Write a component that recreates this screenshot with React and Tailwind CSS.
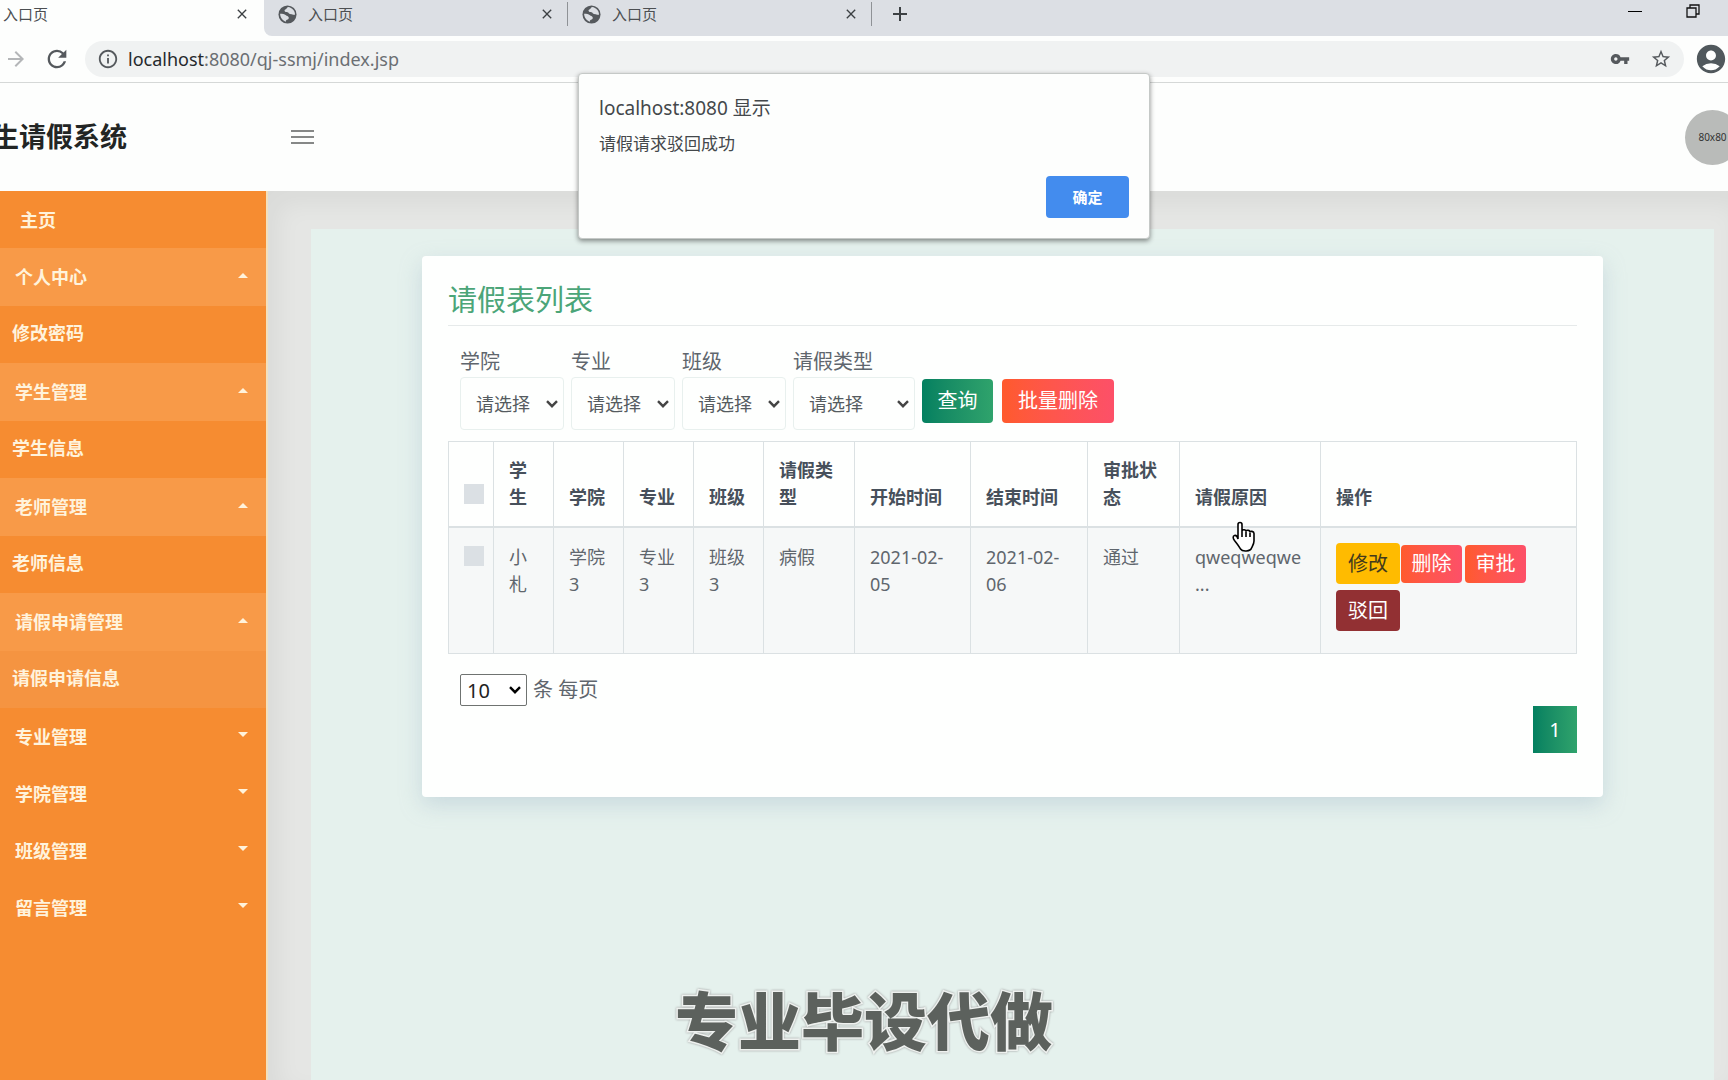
import React from 'react';
import {
  MdAccountCircle,
  MdAdd,
  MdArrowForward,
  MdClose,
  MdInfoOutline,
  MdRefresh,
  MdStarBorder,
  MdVpnKey,
} from 'react-icons/md';

const menu = [
  { name: '个人中心', open: true, child: '修改密码' },
  { name: '学生管理', open: true, child: '学生信息' },
  { name: '老师管理', open: true, child: '老师信息' },
  { name: '请假申请管理', open: true, child: '请假申请信息', active: true },
  { name: '专业管理' },
  { name: '学院管理' },
  { name: '班级管理' },
  { name: '留言管理' },
];

const filters = [
  { id: 'xueyuan', label: '学院', width: 'w-[104px]' },
  { id: 'zhuanye', label: '专业', width: 'w-[104px]' },
  { id: 'banji', label: '班级', width: 'w-[104px]' },
  { id: 'leixing', label: '请假类型', width: 'w-[122px]' },
];

const columns = ['学生', '学院', '专业', '班级', '请假类型', '开始时间', '结束时间', '审批状态', '请假原因', '操作'];
const row = ['小札', '学院3', '专业3', '班级3', '病假', '2021-02-05', '2021-02-06', '通过', 'qweqweqwe...'];

function Chevron({ className }) {
  return (
    <svg className={className} viewBox="0 0 12 8" fill="none" stroke="currentColor" strokeWidth="2.4">
      <path d="M1 1.2l5 5 5-5" />
    </svg>
  );
}

/* 默认网站图标 */
function Globe() {
  return (
    <svg className="size-[19px] mr-[11px]" viewBox="0 0 20 20">
      <circle cx="10" cy="10" r="9.5" fill="#55595d" />
      <path
        d="M10.5 2.2c-1.6 1-1.4 2-2.8 2.6-1.5.6-.8 2.2.4 2.6 1.4.4 2.600 0 3.200 1.200.6 1.200 2.200.6 3.400 1.200 1.400.8 2.400.6 3.200.4.2-3.600-2.800-7.400-7.400-8z"
        fill="#dcdfe4"
      />
      <path
        d="M2.200 9.200c.2 4 2.600 7.400 6.200 8.400-.4-1.600.6-2 1.800-2.400 1.400-.6 1.600-2.400.4-3.200-1-.6-1.800-.4-2.600-1.400-.8-1.200-3.400-1.400-5.800-1.400z"
        fill="#dcdfe4"
      />
    </svg>
  );
}

function Tab({ active }) {
  return (
    <div
      className={
        active
          ? 'w-[264px] h-full bg-[#fdfefd] flex items-center pl-[3px] pr-3.5 pb-2'
          : 'w-[304px] h-full flex items-center pl-3.5 pr-3 pb-2'
      }
    >
      {!active && <Globe />}
      <span className="flex-1 text-[15px] leading-5 text-[#4c4f52]">入口页</span>
      <button aria-label="关闭标签页">
        <MdClose className="size-4 text-[#3c4043] stroke-[#3c4043]" />
      </button>
      {!active && <span className="w-px h-6 ml-3 -mr-3 bg-[#8f9296]" />}
    </div>
  );
}

/* 浏览器外壳 */
function Browser() {
  return (
    <div className="shrink-0 bg-[#fdfefd] border-b border-[#d5d8d7]">
      <div className="h-9 bg-[#fdfefd] flex items-center">
        <Tab active />
        <div className="flex-1 h-full flex items-center bg-[#dcdfe4] rounded-bl-lg">
          <Tab />
          <Tab />
          <button aria-label="新标签页" className="ml-4 pb-2">
            <MdAdd className="size-6 text-[#3c4043]" />
          </button>
          <div className="ml-auto mr-7 flex items-center gap-11 pb-3.5">
            <button aria-label="最小化" className="w-3.5 h-3.5 flex items-center">
              <span className="w-full h-px bg-black" />
            </button>
            <button aria-label="还原">
              <svg className="size-3.5" viewBox="0 0 14 14" fill="none" stroke="#111" strokeWidth="1.3">
                <path d="M1 4h9v9H1zM4 4V1h9v9h-3" />
              </svg>
            </button>
          </div>
        </div>
      </div>

      <div className="h-[46px] flex items-center pl-1">
        <MdArrowForward className="size-6 text-[#b4b6b8]" />
        <button aria-label="刷新" className="ml-[15px]">
          <MdRefresh className="size-7 text-[#55595d]" />
        </button>
        <div className="ml-3.5 flex-1 h-9 rounded-full bg-[#f0f2f2] flex items-center pl-3 pr-3">
          <MdInfoOutline className="size-[22px] text-[#55595d]" />
          <div className="ml-[9px] text-[18px] leading-6 text-[#6b6f73]">
            <span className="text-[#26292c]">localhost</span>:8080/qj-ssmj/index.jsp
          </div>
          <MdVpnKey className="ml-auto size-5 text-[#55595d]" />
          <MdStarBorder className="ml-5 size-[22px] text-[#55595d]" />
        </div>
        <MdAccountCircle className="ml-2.5 size-[34px] text-[#50585c]" />
      </div>
    </div>
  );
}

function Sidebar() {
  return (
    <nav className="w-[268px] shrink-0 bg-[#f68c31] border-r-2 border-[#f3e0bd] text-[18px] leading-6 font-bold text-[#fff3dc]">
      <a href="#" className="h-[57px] pl-5 flex items-center">主页</a>
      {menu.map((item) => (
        <div key={item.name}>
          <a
            href="#"
            className={
              item.open
                ? 'h-[58px] pl-[15px] pr-[18px] flex items-center justify-between bg-[#f89a48]'
                : 'h-[57px] pl-[15px] pr-[18px] flex items-center justify-between'
            }
          >
            {item.name}
            <svg className={item.open ? 'w-[10px] h-[5px] mb-1' : 'w-[10px] h-[5px] mb-1 rotate-180'} viewBox="0 0 10 5" fill="currentColor">
              <path d="M0 5l5-5 5 5z" />
            </svg>
          </a>
          {item.child && (
            <a
              href="#"
              className={item.active ? 'h-[57px] pl-3 pb-[3px] flex items-center bg-[#f59441]' : 'h-[57px] pl-3 pb-[3px] flex items-center'}
            >
              {item.child}
            </a>
          )}
        </div>
      ))}
    </nav>
  );
}

function LeaveTable() {
  return (
    <table className="mt-[11px] w-full table-fixed border-collapse text-[18px] leading-[27px] text-left">
      <colgroup>
        <col className="w-[45px]" />
        <col className="w-[60px]" />
        <col className="w-[70px]" />
        <col className="w-[70px]" />
        <col className="w-[70px]" />
        <col className="w-[91px]" />
        <col className="w-[116px]" />
        <col className="w-[117px]" />
        <col className="w-[92px]" />
        <col className="w-[141px]" />
        <col />
      </colgroup>
      <thead>
        <tr className="align-bottom text-[#47505b]">
          <th className="border border-b-2 border-[#dbe1e3] pl-[15px] pb-[22px]">
            <input type="checkbox" aria-label="全选" className="block appearance-none size-5 bg-[#dbe0e4]" />
          </th>
          {columns.map((c) => (
            <th key={c} className="border border-b-2 border-[#dbe1e3] px-[15px] pt-[15px] pb-[15px] font-bold">{c}</th>
          ))}
        </tr>
      </thead>
      <tbody>
        <tr className="align-top bg-[#f6f8f8] text-[#5f666d]">
          <td className="border border-[#dbe1e3] pl-[15px] pt-[18px]">
            <input type="checkbox" aria-label="选择小札" className="block appearance-none size-5 bg-[#dbe0e4]" />
          </td>
          {row.map((v, i) => (
            <td key={i} className="border border-[#dbe1e3] px-[15px] py-4 break-words">{v}</td>
          ))}
          <td className="border border-[#dbe1e3] pl-[15px] pr-8 pt-[15px] pb-[22px]">
            <div className="flex flex-wrap items-center gap-y-1.5 text-[20px] text-white">
              <button className="w-16 h-[41px] rounded-sm bg-[#ffbb00] text-[#423a1c]">修改</button>
              <button className="ml-px w-[61px] h-[38px] rounded-sm bg-linear-to-r from-[#ff5a2c] to-[#fd5068]">删除</button>
              <button className="ml-[3px] w-[61px] h-[38px] rounded-sm bg-linear-to-r from-[#ff5a2c] to-[#fd5068]">审批</button>
              <button className="w-16 h-[41px] rounded-sm bg-[#923033]">驳回</button>
            </div>
          </td>
        </tr>
      </tbody>
    </table>
  );
}

function LeaveCard() {
  return (
    <section className="bg-[#fefffe] rounded-sm px-[26px] pt-[26px] pb-11 shadow-[0_8px_22px_rgba(150,175,195,0.35)]">
      <h3 className="pb-[7px] text-[29px] leading-9 text-[#4ba578] border-b border-[#e6eaea]">请假表列表</h3>

      <form className="mt-[21px] pl-3 flex items-end gap-[7px] text-[20px] leading-[30px] text-[#5f666d]">
        {filters.map((f) => (
          <div key={f.id} className={f.width}>
            <label htmlFor={f.id} className="block whitespace-nowrap">{f.label}</label>
            <div className="relative">
              <select
                id={f.id}
                className="block appearance-none w-full h-[53px] pl-[15px] border border-[#e8f0ee] rounded-sm bg-[#fefffe] text-[18px] text-[#555b60]"
              >
                <option>请选择</option>
              </select>
              <Chevron className="pointer-events-none absolute right-1.5 top-[23px] w-3 h-2 text-[#444]" />
            </div>
          </div>
        ))}
        <button type="button" className="mb-[7px] w-[71px] h-11 rounded-sm bg-linear-to-r from-[#038060] to-[#2fa36c] text-white">查询</button>
        <button type="button" className="mb-[7px] ml-0.5 w-28 h-11 rounded-sm bg-linear-to-r from-[#ff5a2c] to-[#fd5068] text-white">批量删除</button>
      </form>

      <LeaveTable />

      <div className="mt-5 pl-3 flex items-center text-[20px] leading-8 text-[#5f666d]">
        <label htmlFor="size" className="order-2 ml-1.5">条 每页</label>
        <div className="relative">
          <select id="size" className="block appearance-none w-[67px] h-8 pl-1.5 border border-[#6f7371] rounded-xs bg-white text-[#222]">
            <option>10</option>
          </select>
          <Chevron className="pointer-events-none absolute right-1.5 top-3 w-3 h-2 text-black" />
        </div>
      </div>
      <div className="flex justify-end">
        <button className="w-11 h-[47px] bg-linear-to-r from-[#038060] to-[#2fa36c] text-[20px] text-white">1</button>
      </div>
    </section>
  );
}

function Alert() {
  return (
    <div
      role="dialog"
      className="absolute top-[73px] left-1/2 -translate-x-1/2 w-[572px] h-[166px] px-5 pt-5 pb-5 flex flex-col rounded-sm bg-[#fdfefd] border border-[#c5c9c7] shadow-[0_2px_5px_rgba(0,0,0,0.45)] text-[#44484b]"
    >
      <h2 className="text-[19px] leading-7">localhost:8080 显示</h2>
      <p className="mt-2.5 text-[17px] leading-6">请假请求驳回成功</p>
      <button className="mt-auto ml-auto w-[83px] h-[42px] rounded-sm bg-[#438cee] text-[15px] font-bold text-white">确定</button>
    </div>
  );
}

function App() {
  return (
    <div className="relative min-h-screen overflow-hidden bg-[#fdfefd] flex flex-col font-['Noto_Sans','Noto_Sans_CJK_SC',sans-serif]">
      <Browser />

      <header className="h-[108px] shrink-0 flex items-center overflow-hidden">
        <div className="w-[127px] flex justify-end whitespace-nowrap text-[27px] leading-10 font-bold text-[#222524]">
          生请假系统
        </div>
        <button aria-label="菜单" className="ml-[164px] flex flex-col gap-1">
          <span className="w-[23px] h-[2px] bg-[#868887]" />
          <span className="w-[23px] h-[2px] bg-[#868887]" />
          <span className="w-[23px] h-[2px] bg-[#868887]" />
        </button>
        <div className="ml-auto -mr-3 size-[55px] shrink-0 rounded-full bg-[#b9bbb9] flex items-center justify-center text-[10px] text-[#333]">
          80x80
        </div>
      </header>

      <div className="flex-1 flex">
        <Sidebar />
        <main className="flex-1 min-w-0 pl-[43px] pr-3.5 pt-[38px] flex bg-[#e5e6e4] shadow-[inset_10px_12px_24px_rgba(0,0,0,0.05)]">
          <div className="flex-1 min-w-0 bg-[#e5f1ed] px-[111px] pt-[27px]">
            <LeaveCard />
          </div>
        </main>
      </div>

      <Alert />

      {/* 鼠标指针 */}
      <svg className="absolute left-[1230px] top-[521px] w-[26px] h-8" viewBox="0 0 26 32" fill="#fff" stroke="#000" strokeWidth="1.6">
        <path d="M8 18V3.500c0-2.600 4-2.600 4 0V10c0-1.800 4-1.800 4 .5 0-1.800 4-1.800 4 .8 0-1.600 4-1.200 4 1.200V20c0 3-1.500 5-2.500 7-1 3.500-9 4-11 1-1.500-3-4-6-6-8.500-1.500-2-2-4.500 0-5s3 1.500 3.500 3.500z" />
        <path d="M12 10v6M16 10.500v5.500M20 11.500V16" />
      </svg>

      <div className="absolute bottom-3.5 left-1/2 -translate-x-1/2 whitespace-nowrap text-[63px] leading-[90px] font-black text-[#5c615d] [-webkit-text-stroke:3px_#eef1ef] [paint-order:stroke_fill] drop-shadow-[0_0_1px_#999]">
        专业毕设代做
      </div>
    </div>
  );
}

export default App;
